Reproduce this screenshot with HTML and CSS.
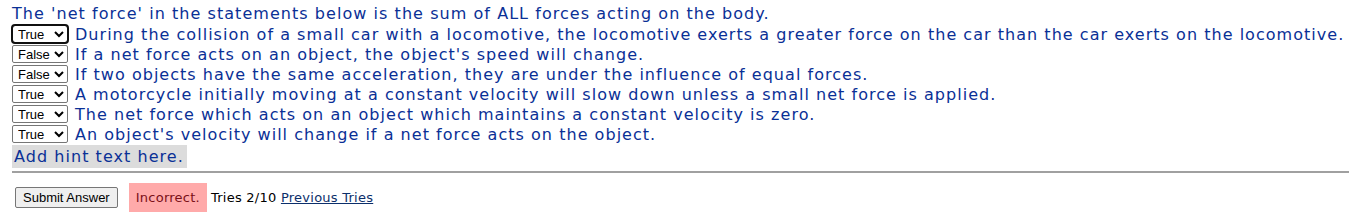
FILE: index.html
```html
<!DOCTYPE html>
<html lang="en">
<head>
<meta charset="UTF-8" />
<title>Forces - True/False</title>
<link rel="stylesheet" href="styles.css">
</head>
<body>
<div class="problem">
  <div class="intro">The 'net force' in the statements below is the sum of ALL forces acting on the body.</div>

  <div class="stmt">
    <select class="tf focused"><option>True</option><option>False</option></select>
    <span>During the collision of a small car with a locomotive, the locomotive exerts a greater force on the car than the car exerts on the locomotive.</span>
  </div>
  <div class="stmt">
    <select class="tf"><option>True</option><option selected>False</option></select>
    <span>If a net force acts on an object, the object's speed will change.</span>
  </div>
  <div class="stmt">
    <select class="tf"><option>True</option><option selected>False</option></select>
    <span>If two objects have the same acceleration, they are under the influence of equal forces.</span>
  </div>
  <div class="stmt">
    <select class="tf"><option>True</option><option>False</option></select>
    <span>A motorcycle initially moving at a constant velocity will slow down unless a small net force is applied.</span>
  </div>
  <div class="stmt">
    <select class="tf"><option>True</option><option>False</option></select>
    <span>The net force which acts on an object which maintains a constant velocity is zero.</span>
  </div>
  <div class="stmt">
    <select class="tf"><option>True</option><option>False</option></select>
    <span>An object's velocity will change if a net force acts on the object.</span>
  </div>

  <div class="hint">Add hint text here.</div>

  <hr class="sep">

  <div class="answer-row">
    <button class="submit-btn">Submit Answer</button>
    <span class="result bad">Incorrect.</span>
    <span class="tries">Tries 2/10 <a href="#" class="prev-link">Previous Tries</a></span>
  </div>
</div>
</body>
</html>
```

FILE: styles.css
```css
body{margin:0;background:#fff;font-family:"DejaVu Sans",Verdana,sans-serif;color:#0a3096}
.problem{padding:4px 3px 0 12px}
.intro{font-size:16px;line-height:20px;letter-spacing:1.05px;white-space:nowrap}
.stmt{display:flex;align-items:center;gap:7px;height:20px;font-size:16px;letter-spacing:1.03px;white-space:nowrap}
.tf{width:56px;height:18px;font-family:"Liberation Sans",Arial,sans-serif;font-size:13px;letter-spacing:0;color:#000;
    background:#fff;border:1px solid #767676;border-radius:2px;padding:0 0 0 1px}
.tf.focused{outline:2px solid #101010;outline-offset:-1px;border-radius:3px}
.hint{display:inline-block;margin-top:1px;background:#dcdcdc;font-size:16px;letter-spacing:1.05px;line-height:23px;padding:0 3px 0 2px}
.sep{margin:3px 0 0;border:0;border-top:2px solid #a0a0a0;height:0}
.answer-row{display:flex;align-items:center;gap:4px;margin-top:10px;padding-left:3px;font-size:13px;letter-spacing:.25px}
.submit-btn{font-family:"Liberation Sans",Arial,sans-serif;font-size:13px;letter-spacing:0;color:#000;background:#efefef;
            border:1px solid #767676;border-radius:2px;height:21px;padding:0 7px;margin-right:7px}
.result.bad{background:#ffaaaa;color:#7a1018;padding:0 7px;line-height:29px}
.tries{color:#000}
.prev-link{color:#0c2f6b;text-decoration:underline}
```
